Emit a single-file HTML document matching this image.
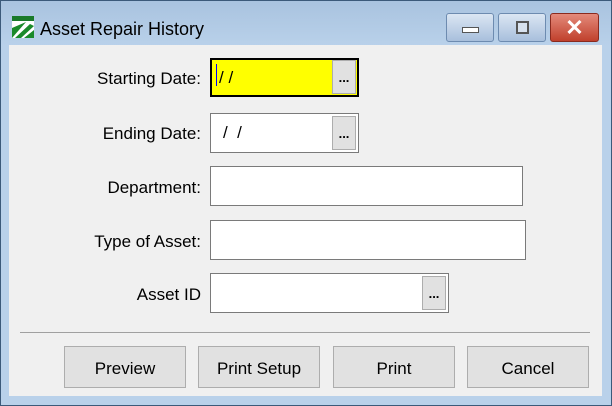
<!DOCTYPE html><html><head><style>
*{box-sizing:border-box;margin:0;padding:0}
body{width:612px;height:406px;overflow:hidden;font-family:"Liberation Sans",sans-serif;font-size:17px;color:#000;background:#b9d1ea}
.frame{position:absolute;left:0;top:0;width:612px;height:406px;background:linear-gradient(#a9c3df,#b9d1ea 45px);border:1px solid #3c5a7a}
.client{position:absolute;left:9px;top:45px;width:593px;height:351px;background:#f0f0f0}
.title{position:absolute;left:40px;top:19px;font-size:18px;color:#000}
.abs{position:absolute}
.lbl{position:absolute;right:411px;text-align:right;white-space:nowrap}
.box{position:absolute;background:#fff;border:1px solid #7a7a7a}
.dots{position:absolute;background:#e1e1e1;border:1px solid #adadad;font-size:13px;text-align:center;font-weight:bold}
.btn{position:absolute;top:346px;width:122px;height:42px;background:#e1e1e1;border:1px solid #adadad;text-align:center;line-height:43px;font-size:17px}
.wb{position:absolute;top:13px;height:29px;border:1px solid #6d8bb0;border-radius:3px}
</style></head><body>
<div class="frame"></div>
<svg class="abs" style="left:12px;top:16px" width="22" height="22" viewBox="0 0 22 22"><rect width="22" height="22" fill="#fff"/><rect width="22" height="5" fill="#1a7a2a"/><path d="M0 22 L0 12 L14 6 Z M3 22 L18 8 L22 10 L9 22Z M12 22 L22 14 L22 22Z" fill="#1a8a2a"/></svg>
<div class="title">Asset Repair History</div>
<div class="wb" style="left:446px;width:48px;background:linear-gradient(#dbe6f3,#a8bfdc)"><div class="abs" style="left:15px;top:13px;width:17px;height:6px;background:#fff;border:1px solid #555"></div></div>
<div class="wb" style="left:498px;width:48px;background:linear-gradient(#dbe6f3,#a8bfdc)"><div class="abs" style="left:17px;top:7px;width:13px;height:13px;border:2px solid #555;background:#d8e2ef"></div></div>
<div class="wb" style="left:550px;width:49px;background:linear-gradient(#e48a7b,#c0402c);border-color:#8a2a1e;color:#fff;font-weight:bold;font-size:22px;text-align:center;line-height:27px">✕</div>
<div class="client"></div>
<div class="lbl" style="top:69px">Starting Date:</div>
<div class="abs" style="left:210px;top:58px;width:149px;height:39px;background:#ff0;border:2px solid #000"></div>
<div class="abs" style="left:216px;top:64px;width:1px;height:22px;background:#00f"></div>
<div class="abs" style="left:219px;top:68px">/ /</div>
<div class="dots" style="left:332px;top:60px;width:24px;height:34px;line-height:34px">...</div>
<div class="lbl" style="top:124px">Ending Date:</div>
<div class="box" style="left:210px;top:113px;width:149px;height:40px"></div>
<div class="abs" style="left:223px;top:123px">/&nbsp;&nbsp;/</div>
<div class="dots" style="left:332px;top:116px;width:24px;height:34px;line-height:34px">...</div>
<div class="lbl" style="top:178px">Department:</div>
<div class="box" style="left:210px;top:166px;width:313px;height:40px"></div>
<div class="lbl" style="top:232px">Type of Asset:</div>
<div class="box" style="left:210px;top:220px;width:316px;height:40px"></div>
<div class="lbl" style="top:285px">Asset ID</div>
<div class="box" style="left:210px;top:273px;width:239px;height:40px"></div>
<div class="dots" style="left:422px;top:276px;width:24px;height:34px;line-height:34px">...</div>
<div class="abs" style="left:20px;top:332px;width:570px;height:1px;background:#a0a0a0"></div>
<div class="btn" style="left:64px">Preview</div>
<div class="btn" style="left:198px">Print Setup</div>
<div class="btn" style="left:333px">Print</div>
<div class="btn" style="left:467px">Cancel</div>
</body></html>
